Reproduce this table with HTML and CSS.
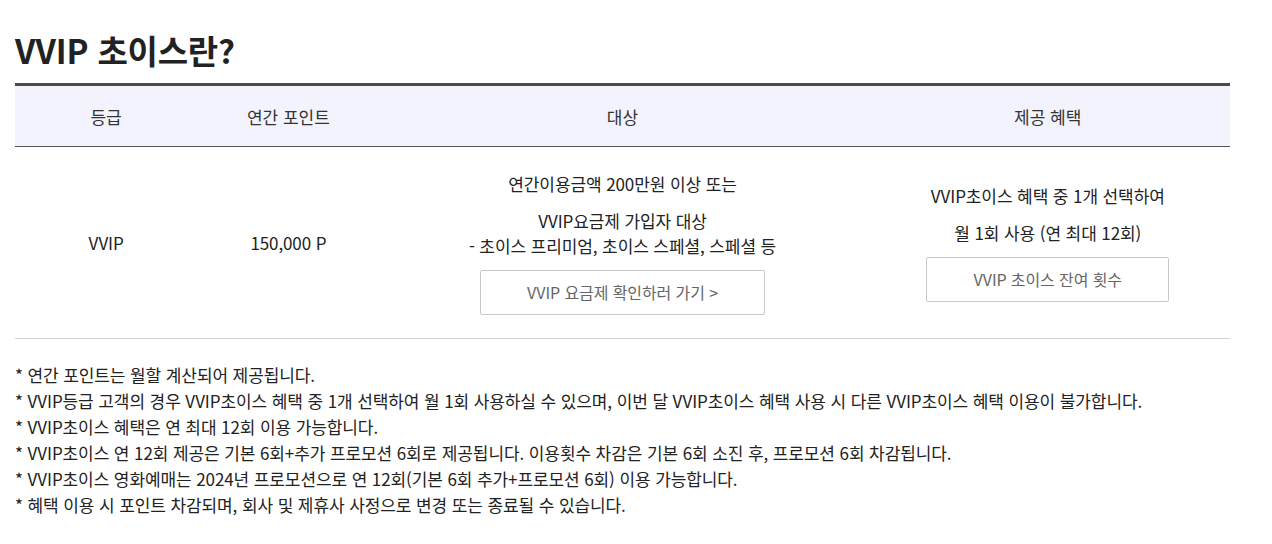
FILE: index.html
```html
<!DOCTYPE html>
<html lang="ko">
<head>
  <meta charset="UTF-8">
  <title>VVIP 초이스란?</title>
  <link rel="stylesheet" href="styles.css">
</head>
<body>
  <div class="wrap">
    <h2 class="title">VVIP 초이스란?</h2>

    <table class="grade-table">
      <colgroup>
        <col class="c1"><col class="c2"><col class="c3"><col class="c4">
      </colgroup>
      <thead>
        <tr>
          <th>등급</th>
          <th>연간 포인트</th>
          <th>대상</th>
          <th>제공 혜택</th>
        </tr>
      </thead>
      <tbody>
        <tr>
          <td>VVIP</td>
          <td>150,000 P</td>
          <td>
            <p>연간이용금액 200만원 이상 또는</p>
            <p>VVIP요금제 가입자 대상<br>- 초이스 프리미엄, 초이스 스페셜, 스페셜 등</p>
            <a href="#" class="btn-line wide">VVIP 요금제 확인하러 가기 &gt;</a>
          </td>
          <td>
            <p>VVIP초이스 혜택 중 1개 선택하여</p>
            <p>월 1회 사용 (연 최대 12회)</p>
            <a href="#" class="btn-line">VVIP 초이스 잔여 횟수</a>
          </td>
        </tr>
      </tbody>
    </table>

    <ul class="notes">
      <li>* 연간 포인트는 월할 계산되어 제공됩니다.</li>
      <li>* VVIP등급 고객의 경우 VVIP초이스 혜택 중 1개 선택하여 월 1회 사용하실 수 있으며, 이번 달 VVIP초이스 혜택 사용 시 다른 VVIP초이스 혜택 이용이 불가합니다.</li>
      <li>* VVIP초이스 혜택은 연 최대 12회 이용 가능합니다.</li>
      <li>* VVIP초이스 연 12회 제공은 기본 6회+추가 프로모션 6회로 제공됩니다. 이용횟수 차감은 기본 6회 소진 후, 프로모션 6회 차감됩니다.</li>
      <li>* VVIP초이스 영화예매는 2024년 프로모션으로 연 12회(기본 6회 추가+프로모션 6회) 이용 가능합니다.</li>
      <li>* 혜택 이용 시 포인트 차감되며, 회사 및 제휴사 사정으로 변경 또는 종료될 수 있습니다.</li>
    </ul>
  </div>
</body>
</html>
```

FILE: styles.css
```css
* {
  box-sizing: border-box;
}

body {
  margin: 0;
  padding: 0;
  font-family: "Noto Sans CJK KR", "Noto Sans", sans-serif;
  color: #222;
  background: #fff;
}

.wrap {
  width: 1215px;
  margin-left: 15px;
  padding-top: 30px;
}

.title {
  margin: 0 0 13px;
  font-size: 33px;
  font-weight: 700;
  line-height: 40px;
  letter-spacing: -0.2px;
  color: #222;
}

.grade-table {
  width: 100%;
  border-collapse: collapse;
  table-layout: fixed;
  border-top: 3px solid #4a4a4a;
}

.c1, .c2 { width: 15%; }
.c3 { width: 40%; }
.c4 { width: 30%; }

.grade-table th {
  height: 62px;
  background: #f2f3fc;
  border-bottom: 1px solid #555;
  font-size: 17px;
  font-weight: 400;
  color: #333;
}

.grade-table td {
  height: 192px;
  padding: 20px 0;
  text-align: center;
  vertical-align: middle;
  border-bottom: 1px solid #d4d4d4;
  font-size: 17px;
  line-height: 25px;
  letter-spacing: -0.1px;
}

.grade-table td p {
  margin: 0 0 12px;
}

.btn-line {
  display: inline-block;
  width: 243px;
  height: 45px;
  line-height: 43px;
  border: 1px solid #c8c8c8;
  border-radius: 2px;
  font-size: 16px;
  color: #666;
  text-decoration: none;
}

.btn-line.wide {
  width: 285px;
}

.notes {
  list-style: none;
  margin: 23px 0 0;
  padding: 0;
  font-size: 17px;
  line-height: 26px;
  letter-spacing: -0.1px;
  color: #222;
}
```
